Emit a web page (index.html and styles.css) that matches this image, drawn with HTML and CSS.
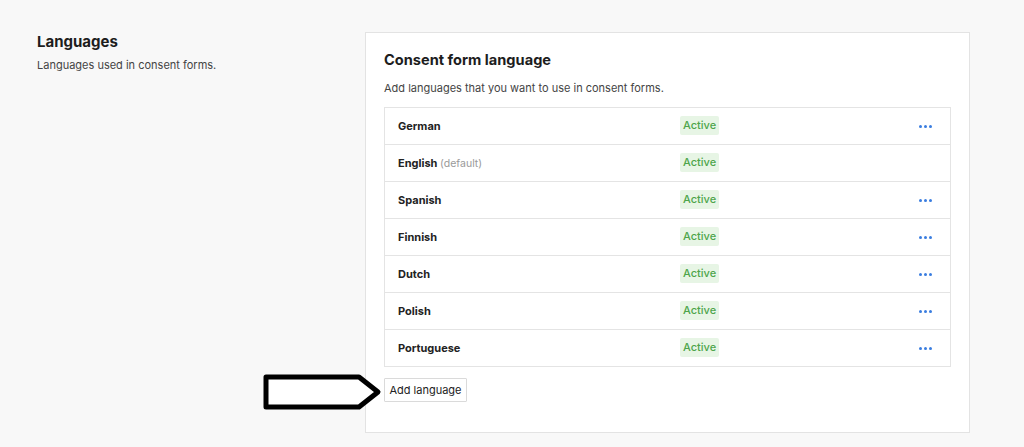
FILE: index.html
```html
<!DOCTYPE html>
<html>
<head>
<meta charset="utf-8">
<link rel="stylesheet" href="styles.css">
</head>
<body>
<div class="page">
  <div class="side">
    <h2 class="side-title">Languages</h2>
    <p class="side-desc">Languages used in consent forms.</p>
  </div>
  <div class="card">
    <h1 class="card-title">Consent form language</h1>
    <p class="card-desc">Add languages that you want to use in consent forms.</p>
    <div class="table">
      <div class="row"><div class="name">German</div><div class="status"><span class="badge">Active</span></div><div class="more"><span class="dots"><i></i><i></i><i></i></span></div></div>
      <div class="row"><div class="name">English <span class="default">(default)</span></div><div class="status"><span class="badge">Active</span></div><div class="more"></div></div>
      <div class="row"><div class="name">Spanish</div><div class="status"><span class="badge">Active</span></div><div class="more"><span class="dots"><i></i><i></i><i></i></span></div></div>
      <div class="row"><div class="name">Finnish</div><div class="status"><span class="badge">Active</span></div><div class="more"><span class="dots"><i></i><i></i><i></i></span></div></div>
      <div class="row"><div class="name">Dutch</div><div class="status"><span class="badge">Active</span></div><div class="more"><span class="dots"><i></i><i></i><i></i></span></div></div>
      <div class="row"><div class="name">Polish</div><div class="status"><span class="badge">Active</span></div><div class="more"><span class="dots"><i></i><i></i><i></i></span></div></div>
      <div class="row"><div class="name">Portuguese</div><div class="status"><span class="badge">Active</span></div><div class="more"><span class="dots"><i></i><i></i><i></i></span></div></div>
    </div>
    <div class="actions">
      <button class="btn">Add language</button>
      <svg class="pointer" width="124" height="40" viewBox="0 0 124 40">
        <polygon points="5,5 98,5 117,20 98,35 5,35" fill="#fff" stroke="#000" stroke-width="5" stroke-linejoin="round"/>
      </svg>
    </div>
  </div>
</div>
</body>
</html>
```
FILE: styles.css
```css
* { box-sizing: border-box; }
html, body { margin: 0; padding: 0; }
body {
  background: #f8f8f8;
  font-family: Inter, "Noto Sans", "Liberation Sans", sans-serif;
  color: #1f1f1f;
  width: 1024px;
  height: 447px;
  overflow: hidden;
}
.page {
  display: flex;
  padding: 32px 0 0 37px;
}
.side {
  width: 328px;
}
.side-title {
  margin: 0;
  font-size: 15px;
  line-height: 20px;
  font-weight: 700;
  color: #1d1d1d;
}
.side-desc {
  margin: 6px 0 0;
  font-size: 11px;
  line-height: 14px;
  color: #444;
}
.card {
  width: 605px;
  background: #fff;
  border: 1px solid #e3e3e3;
  padding: 17px 18px 30px 18px;
}
.card-title {
  margin: 0;
  font-size: 14.6px;
  line-height: 20px;
  font-weight: 700;
  color: #1d1d1d;
}
.card-desc {
  margin: 11px 0 0;
  font-size: 11px;
  line-height: 14px;
  color: #444;
}
.table {
  margin-top: 12px;
  border: 1px solid #e4e4e4;
  border-bottom: none;
}
.row {
  display: flex;
  align-items: center;
  height: 37px;
  border-bottom: 1px solid #e4e4e4;
}
.name {
  width: 295px;
  padding-left: 13px;
  font-size: 11px;
  font-weight: 700;
  color: #222;
}
.default {
  font-weight: 400;
  color: #999;
  font-size: 10.5px;
}
.status {
  flex: 1;
  display: flex;
  align-items: center;
  margin-top: -2px;
}
.badge {
  display: block;
  background: #e7f5e5;
  color: #4ea54b;
  font-size: 11px;
  font-weight: 500;
  line-height: 19px;
  padding: 0 3px;
  border-radius: 2px;
}
.more {
  width: 31px;
  height: 100%;
  display: flex;
  align-items: center;
}
.dots {
  display: flex;
  gap: 2px;
}
.dots i {
  display: block;
  width: 3px;
  height: 3px;
  border-radius: 50%;
  background: #3a7de0;
}
.actions {
  position: relative;
  margin-top: 11px;
  height: 24px;
}
.btn {
  display: block;
  height: 24px;
  width: 83px;
  padding: 0;
  background: #fff;
  border: 1px solid #dadada;
  border-radius: 1px;
  font-family: Inter, "Noto Sans", "Liberation Sans", sans-serif;
  font-size: 11px;
  color: #222;
}
.pointer {
  position: absolute;
  left: -123px;
  top: -6px;
}
```
